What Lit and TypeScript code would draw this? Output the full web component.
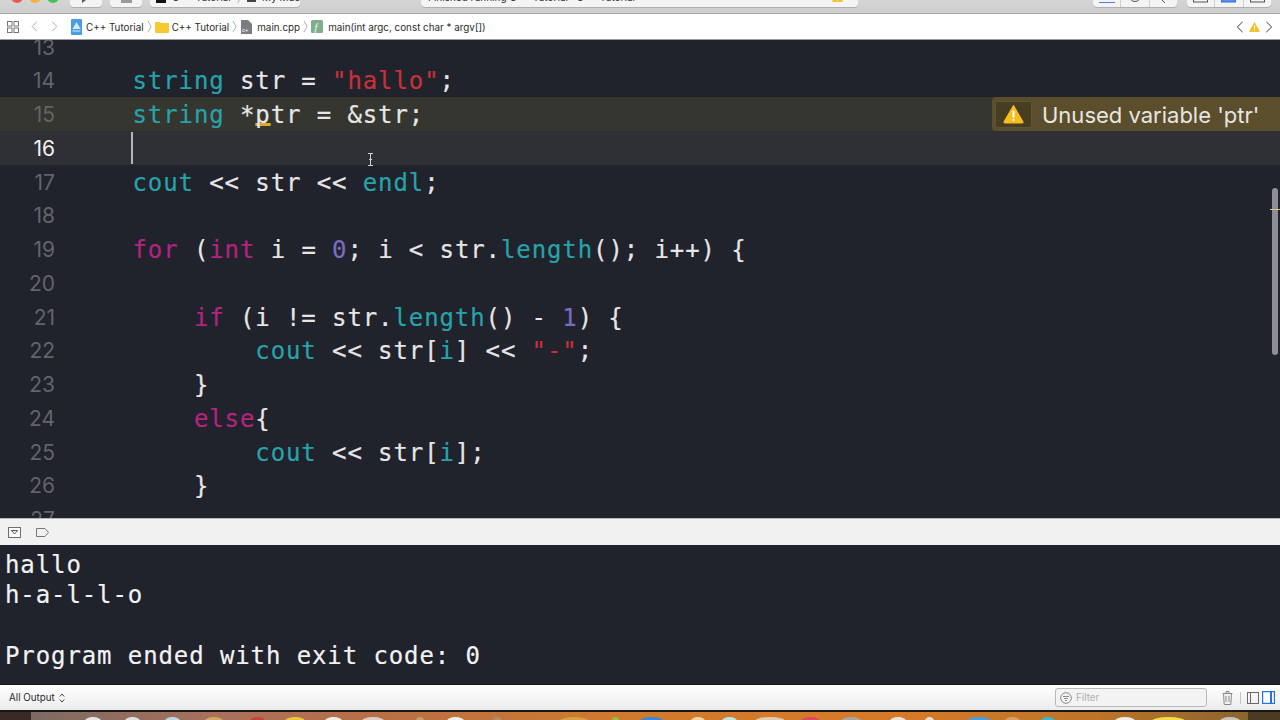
import { LitElement, html, css } from "lit";
import { customElement } from "lit/decorators.js";

type Tok = [string, string?];
const LINES: { n: number; t: Tok[]; cls?: string }[] = [
  { n: 13, t: [] },
  { n: 14, t: [["string", "ty"], [" str = "], ['"hallo"', "st"], [";"]] },
  { n: 15, cls: "warn", t: [["string", "ty"], [" *"], ["p", "uw"], ["tr = &str;"]] },
  { n: 16, cls: "cur", t: [] },
  { n: 17, t: [["cout", "ty"], [" << str << "], ["endl", "ty"], [";"]] },
  { n: 18, t: [] },
  { n: 19, t: [["for", "kw"], [" ("], ["int", "kw"], [" i = "], ["0", "nu"], ["; i < str."], ["length", "ty"], ["(); i++) {"]] },
  { n: 20, t: [] },
  { n: 21, t: [["    "], ["if", "kw"], [" (i != str."], ["length", "ty"], ["() - "], ["1", "nu"], [") {"]] },
  { n: 22, t: [["        "], ["cout", "ty"], [" << str["], ["i", "ty"], ["] << "], ['"-"', "st"], [";"]] },
  { n: 23, t: [["    }"]] },
  { n: 24, t: [["    "], ["else", "kw"], ["{"]] },
  { n: 25, t: [["        "], ["cout", "ty"], [" << str["], ["i", "ty"], ["];"]] },
  { n: 26, t: [["    }"]] },
  { n: 27, t: [] },
];

// Tops of the Dock icons that peek out under the window: [left, width, colour].
const DOCK: [number, number, string][] = [
  [85, 16, "#e6e4e6"], [125, 15, "#d8e4e2"], [165, 15, "#bcd6e4"], [205, 18, "#d2a860"],
  [250, 15, "#c8403c"], [285, 20, "#eec53a"], [325, 17, "#f0ece6"], [362, 22, "#d8d0c8"],
  [416, 8, "#c89a70"], [447, 17, "#f2efe9"], [492, 10, "#b88a60"], [560, 28, "#d8a040"],
  [612, 7, "#8cc04a"], [640, 23, "#3a86d8"], [691, 14, "#f0d8a0"], [722, 15, "#bfe6e0"],
  [755, 30, "#e0ccb0"], [801, 19, "#e04860"], [841, 20, "#a8a4a4"], [890, 16, "#e8e4e0"],
  [925, 9, "#e8e0d8"], [967, 24, "#4aa0dc"], [1005, 15, "#d8a068"], [1041, 14, "#40b4c8"],
  [1115, 20, "#f0ece6"], [1152, 33, "#f2dc4a"], [1220, 20, "#c8c4bc"],
];

const warnTri = (w: number, h: number) => html`<svg width=${w} height=${h} viewBox="0 0 20 18"><path d="M10 1 L19 16.5 Q19.4 17.5 18 17.5 L2 17.5 Q.6 17.5 1 16.5 Z" fill="#f5bd1f" stroke="#f5bd1f" stroke-linejoin="round"/><rect x="9" y="5.5" width="2" height="7" rx="1" fill="#fff"/><rect x="9" y="13.6" width="2" height="2" rx="1" fill="#fff"/></svg>`;

const chev = (dir: "l" | "r", color: string, w = 9, h = 14, sw = 1.1) => html`<svg width=${w} height=${h} viewBox="0 0 9 14" preserveAspectRatio="none" fill="none" stroke=${color} stroke-width=${sw}><path d=${dir === "l" ? "M7.5 1 L1.5 7 L7.5 13" : "M1.5 1 L7.5 7 L1.5 13"}/></svg>`;

@customElement("app-root")
export class AppRoot extends LitElement {
  static styles = css`
    :host { display: block; width: 1280px; height: 720px; overflow: hidden; font-family: "Inter", "Liberation Sans", sans-serif; background: #20222c; }
    .toolbar { height: 13px; background: linear-gradient(#d6d5d6, #cfcecf); border-bottom: 1px solid #a9a8a9; display: flex; align-items: flex-end; overflow: hidden; }
    .tb-btn { height: 20px; background: #f5f4f5; border-radius: 4px; box-shadow: 0 1px 0 #b0afb0; margin-bottom: 6px; flex: none; display: flex; align-items: center; font-size: 10px; color: #333; white-space: nowrap; }
    .center { justify-content: center; }
    .lights { display: flex; gap: 6px; margin-left: 11px; flex: none; align-self: flex-start; }
    .light { width: 12px; height: 12px; border-radius: 50%; margin-top: -9px; }
    .red { background: #ee5a52; } .amber { background: #f3b33e; } .green { background: #46c253; }
    .play { width: 32px; margin-left: 11px; }
    .stop { width: 32px; margin-left: 8px; }
    .scheme { width: 150px; margin-left: 8px; padding-left: 6px; box-sizing: border-box; gap: 6px; }
    .status { width: 437px; margin-left: 121px; padding: 0 15px 0 7px; box-sizing: border-box; justify-content: space-between; }
    .seg1 { width: 84px; margin-left: 235px; }
    .seg2 { width: 84px; margin-left: 10px; }
    .seg { flex: 1; height: 100%; display: flex; align-items: center; justify-content: center; border-left: 1px solid #cfcecf; }
    .seg:first-child { border-left: none; }
    .glyph-stop { width: 11px; height: 11px; background: #9a9a9a; }
    .glyph-mac { width: 11px; height: 9px; background: #444; }
    .glyph-sch { width: 12px; height: 11px; background: #111; }
    .bc { height: 25px; background: #fff; display: flex; align-items: center; font-size: 9.85px; color: #2b2b2b; border-bottom: 1px solid #9b9ca0; }
    .bc-left { display: flex; align-items: center; flex: 1; }
    .bc-grid { margin-left: 7px; }
    .nav { display: flex; }
    .nav-l { margin-left: 12px; }
    .nav-r { margin-left: 13px; }
    .proj { margin-left: 13px; gap: 4px; }
    .bc-item { display: flex; align-items: center; white-space: nowrap; }
    .func-item { gap: 5px; }
    .folder-item { gap: 3px; }
    .file-item { gap: 5px; margin-left: 1px; }
    .sep { margin: 0 3px; display: flex; }
    .warn-l { display: flex; margin-right: 5px; }
    .warn-i { display: flex; margin-right: 5px; }
    .warn-r { display: flex; margin-right: 7px; }
    .editor { height: 478px; overflow: hidden; position: relative; background: #20222c; }
    .lines { margin-top: -10.5px; }
    .line { height: 33.77px; display: flex; font-family: "DejaVu Sans Mono", monospace; font-size: 24px; line-height: 33.77px; color: #e6e6e6; letter-spacing: 0.9px; white-space: pre; }
    .num { width: 56px; flex: none; text-align: right; padding: 1px 1px 0 0; box-sizing: border-box; color: #62646a; font-family: "Inter", sans-serif; font-size: 21px; letter-spacing: 0; margin-right: 76.5px; }
    .code { flex: 1; position: relative; padding-top: 2px; -webkit-text-stroke: 0.2px; }
    .warn { background: #35362f; }
    .cur { background: #2f3035; }
    .cur .num { color: #f2f2f2; }
    .ty { color: #27a2ab; }
    .kw { color: #b3237f; }
    .st { color: #c8313a; }
    .nu { color: #7a6cc0; }
    .uw { text-decoration: underline; text-decoration-color: #e0a92a; text-decoration-thickness: 3px; text-underline-offset: 0px; text-decoration-skip-ink: none; }
    .caret { position: absolute; left: -2px; top: 1px; width: 2px; height: 32px; background: #b4b4b4; }
    .banner { position: absolute; right: 0; top: 0; height: 34px; display: flex; align-items: center; background: #5a4e2d; border-radius: 4px 0 0 4px; padding-left: 3px; font-family: "Inter", "Liberation Sans", sans-serif; font-size: 22px; letter-spacing: 0; color: #e8e6e0; -webkit-text-stroke: 0; }
    .banner-ic { width: 37px; height: 27px; background: #463d23; border: 1px solid #5f5434; border-radius: 3px; box-sizing: border-box; display: flex; align-items: center; justify-content: center; margin-right: 10px; }
    .banner-t { width: 238px; padding-top: 3px; }
    .ibeam { position: absolute; left: 367px; top: 113px; }
    .scroll { position: absolute; left: 1272px; top: 148px; width: 6px; height: 167px; border-radius: 3px; background: #8d8e96; }
    .scroll-mark { position: absolute; left: 1270px; top: 169px; width: 10px; height: 1px; background: #d8c68a; }
    .dbg { height: 26px; background: #f2f1f2; border-top: 1px solid #b8b8b8; display: flex; align-items: center; padding-left: 8px; gap: 15px; }
    .console { height: 139px; background: #20222c; color: #f2f2f2; font-family: "DejaVu Sans Mono", monospace; font-size: 24px; letter-spacing: 0.9px; line-height: 30.4px; padding: 5px 0 0 5px; box-sizing: border-box; white-space: pre; -webkit-text-stroke: 0.2px; }
    .bottom { height: 25px; background: linear-gradient(#fff, #ececec); border-top: 1px solid #15161b; border-bottom: 2px solid #1a1614; display: flex; align-items: center; padding: 0 5px 0 9px; font-size: 9.8px; color: #2a2a2a; }
    .updown { margin-left: 4px; }
    .spacer { flex: 1; }
    .filter { width: 152px; height: 19px; border: 1px solid #b9b9b9; border-radius: 3px; background: #f3f3f3; box-sizing: border-box; display: flex; align-items: center; padding-left: 4px; gap: 4px; color: #aeaeae; font-size: 9.8px; margin-right: 15px; }
    .vsep { width: 1px; height: 12px; background: #c4c4c4; margin: 0 6px 0 7px; }
    .panel-r { margin-left: 3px; }
    .dock { height: 8px; position: relative; overflow: hidden; background: linear-gradient(90deg, #3a2a26 0 31px, #7d6a62 31px, #a8705c 220px, #b86f45 380px, #d07a2e 620px, #d67a28 900px, #bb7428 1100px, #8a6430 1248px, #4d3a22 1248px); }
    .tip { position: absolute; top: 5px; height: 8px; border-radius: 50% 50% 0 0; }
  `;

  render() {
    return html`
      <div class="toolbar">
        <div class="lights">
          <div class="light red"></div>
          <div class="light amber"></div>
          <div class="light green"></div>
        </div>
        <div class="tb-btn play center"><svg width="10" height="12" viewBox="0 0 10 12"><path d="M1 0 L9 6 L1 12 Z" fill="#555"/></svg></div>
        <div class="tb-btn stop center"><div class="glyph-stop"></div></div>
        <div class="tb-btn scheme"><div class="glyph-sch"></div><span>C++ Tutorial</span>${chev("r", "#999", 5, 13)}<div class="glyph-mac"></div><span>My Mac</span></div>
        <div class="tb-btn status"><span>Finished running C++ Tutorial : C++ Tutorial</span>${warnTri(11, 10)}</div>
        <div class="tb-btn seg1">
          <div class="seg"><svg width="16" height="12" viewBox="0 0 16 12" stroke="#4a7fd8"><path d="M0 3.5 H16 M0 7.5 H16 M0 11.5 H16"/></svg></div>
          <div class="seg"><svg width="15" height="12" viewBox="0 0 15 12" fill="none" stroke="#555"><circle cx="8" cy="5" r="5.5"/></svg></div>
          <div class="seg"><svg width="8" height="12" viewBox="0 0 8 12" fill="none" stroke="#555"><path d="M6 2 L1 7 L6 12"/></svg></div>
        </div>
        <div class="tb-btn seg2">
          <div class="seg"><svg width="15" height="12" viewBox="0 0 15 12" fill="none" stroke="#555"><rect x=".5" y=".5" width="14" height="10.5"/></svg></div>
          <div class="seg"><svg width="15" height="12" viewBox="0 0 15 12" fill="#5b8fe8" stroke="#2f6fd8"><rect x=".5" y=".5" width="14" height="10.5"/></svg></div>
          <div class="seg"><svg width="15" height="12" viewBox="0 0 15 12" fill="none" stroke="#555"><rect x=".5" y=".5" width="14" height="10.5"/></svg></div>
        </div>
      </div>
      <div class="bc">
        <div class="bc-left">
          <svg class="bc-grid" width="12" height="12" viewBox="0 0 12 12" fill="none" stroke="#777" stroke-width="1"><rect x=".5" y=".5" width="4.5" height="4.5"/><rect x="7" y=".5" width="4.5" height="4.5"/><rect x=".5" y="7" width="4.5" height="4.5"/><rect x="7" y="7" width="4.5" height="4.5"/></svg>
          <span class="nav nav-l">${chev("l", "#9a9a9a", 7, 11)}</span>
          <span class="nav nav-r">${chev("r", "#9a9a9a", 7, 11)}</span>
          <div class="bc-item proj">
            <svg width="11" height="16" viewBox="0 0 11 16"><rect width="11" height="16" rx="1" fill="#4a9be8"/><path d="M5.5 3 L9.5 10 L1.5 10 Z" fill="#d5e8fa"/><path d="M1.5 12 H9.5" stroke="#d5e8fa"/></svg>
            <span>C++ Tutorial</span>
          </div>
          <span class="sep">${chev("r", "#a0a0a0", 5, 13)}</span>
          <div class="bc-item folder-item">
            <svg width="14" height="12" viewBox="0 0 14 12"><path d="M0 2 Q0 1 1 1 H5 L6 2 H13 Q14 2 14 3 V11 Q14 12 13 12 H1 Q0 12 0 11 Z" fill="#f6c931"/></svg>
            <span>C++ Tutorial</span>
          </div>
          <span class="sep">${chev("r", "#a0a0a0", 5, 13)}</span>
          <div class="bc-item file-item">
            <svg width="11" height="14" viewBox="0 0 11 14"><path d="M0 0 H7 L11 4 V14 H0 Z" fill="#7b7c84"/><text x="1" y="12" font-size="6" fill="#fff" font-family="Liberation Sans">c+</text></svg>
            <span>main.cpp</span>
          </div>
          <span class="sep">${chev("r", "#a0a0a0", 5, 13)}</span>
          <div class="bc-item func-item">
            <svg width="12" height="13" viewBox="0 0 12 13"><rect width="12" height="13" rx="1.5" fill="#7fae8c"/><text x="3.5" y="10.5" font-size="10" font-style="italic" fill="#fff" font-family="Liberation Serif">f</text></svg>
            <span>main(int argc, const char * argv[])</span>
          </div>
        </div>
        <span class="warn-l">${chev("l", "#333", 8, 12)}</span>
        <span class="warn-i">${warnTri(11, 10)}</span>
        <span class="warn-r">${chev("r", "#333", 8, 12)}</span>
      </div>
      <div class="editor">
        <div class="lines">
          ${LINES.map((l) => html`<div class="line ${l.cls ?? ""}"><div class="num">${l.n}</div><div class="code">${l.t.map(([s, c]) => (c ? html`<span class=${c}>${s}</span>` : s))}${l.cls === "cur" ? html`<div class="caret"></div>` : ""}${l.cls === "warn" ? html`<div class="banner"><div class="banner-ic">${warnTri(21, 20)}</div><div class="banner-t">Unused variable 'ptr'</div></div>` : ""}</div></div>`)}
        </div>
        <svg class="ibeam" width="7" height="13" viewBox="0 0 7 13" fill="none" stroke="#d0d0d0" stroke-width="1"><path d="M1 .5 H6 M3.5 .5 V12.5 M1 12.5 H6 M2 6.5 H5"/></svg>
        <div class="scroll"></div>
        <div class="scroll-mark"></div>
      </div>
      <div class="dbg">
        <svg width="13" height="11" viewBox="0 0 13 11"><rect x=".5" y=".5" width="12" height="10" fill="#fafafa" stroke="#6e6e6e"/><path d="M3.5 3.5 H9.5 L6.5 7 Z" fill="none" stroke="#555"/></svg>
        <svg width="13" height="9" viewBox="0 0 13 9" fill="none" stroke="#777"><path d="M.5 .5 H9 L12.5 4.5 L9 8.5 H.5 Z"/></svg>
      </div>
      <div class="console">hallo
h-a-l-l-o

Program ended with exit code: 0</div>
      <div class="bottom">
        <span>All Output</span>
        <svg class="updown" width="6" height="10" viewBox="0 0 6 10" fill="none" stroke="#444"><path d="M.8 3.5 L3 1 L5.2 3.5 M.8 6.5 L3 9 L5.2 6.5"/></svg>
        <div class="spacer"></div>
        <div class="filter">
          <svg width="12" height="12" viewBox="0 0 12 12" fill="none" stroke="#8a8a8a"><circle cx="6" cy="6" r="5.3"/><path d="M3 4.5 H9 M4 6.5 H8 M5 8.5 H7"/></svg>
          <span>Filter</span>
        </div>
        <svg width="11" height="14" viewBox="0 0 11 14" fill="#f0f0f0" stroke="#8a8a8a"><path d="M.5 2.5 H10.5 M4 2.5 V.5 H7 V2.5 M1.5 2.5 L2.2 13.5 H8.8 L9.5 2.5 M4 5 V11 M7 5 V11"/></svg>
        <div class="vsep"></div>
        <svg width="12" height="12" viewBox="0 0 12 12" fill="none" stroke="#6a6a6a"><rect x=".5" y=".5" width="11" height="11"/><path d="M3.5 .5 V11.5" stroke-width="1"/></svg>
        <svg class="panel-r" width="13" height="13" viewBox="0 0 13 13" fill="#fff" stroke="#1f74e0" stroke-width="1.2"><rect x=".6" y=".6" width="11.8" height="11.8"/><path d="M9 .6 V12.4" stroke-width="2"/></svg>
      </div>
      <div class="dock">
        ${DOCK.map(([l, w, c]) => html`<div class="tip" style="left:${l}px;width:${w}px;background:${c}"></div>`)}
      </div>
    `;
  }
}
